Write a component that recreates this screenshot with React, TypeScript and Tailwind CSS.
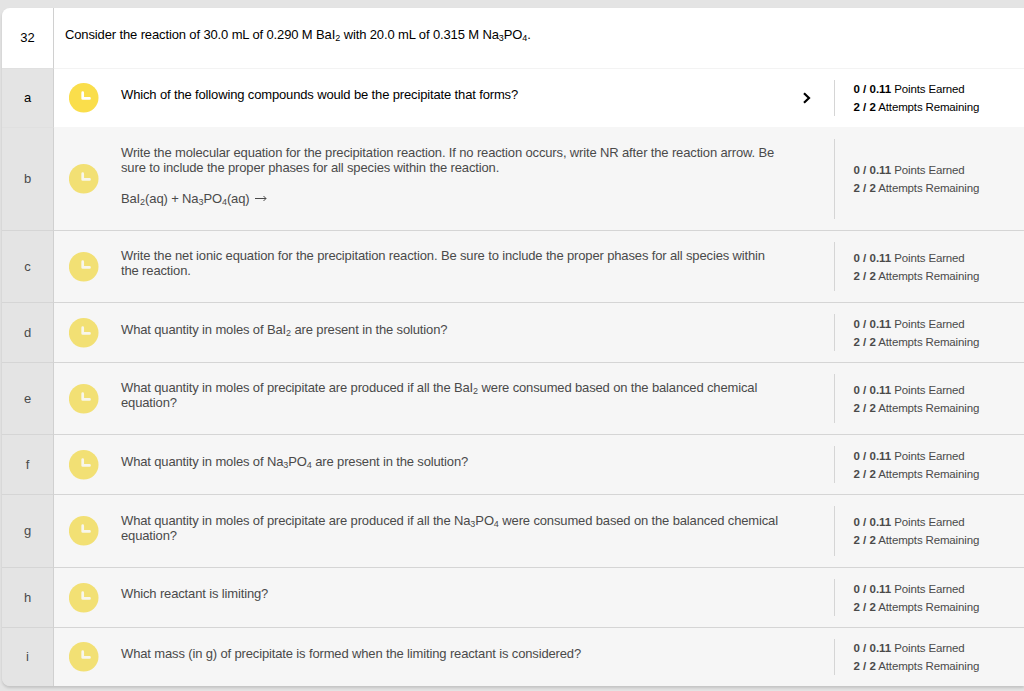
import React, { ReactNode } from "react";

type Part = {
  id: string;
  height: string;
  textPad: string;
  active?: boolean;
  body: ReactNode;
};

const Sub = ({ children }: { children: ReactNode }) => (
  <span className="relative top-[2px] text-[9px] leading-none tracking-normal">{children}</span>
);

const BaI2 = () => (
  <>
    BaI<Sub>2</Sub>
  </>
);

const Na3PO4 = () => (
  <>
    Na<Sub>3</Sub>PO<Sub>4</Sub>
  </>
);

const parts: Part[] = [
  {
    id: "a",
    height: "h-[59px]",
    textPad: "pt-[18px]",
    active: true,
    body: <p>Which of the following compounds would be the precipitate that forms?</p>,
  },
  {
    id: "b",
    height: "h-[103px]",
    textPad: "pt-[17.4px]",
    body: (
      <>
        <p>
          Write the molecular equation for the precipitation reaction. If no reaction occurs, write NR after the
          reaction arrow. Be
          <br />
          sure to include the proper phases for all species within the reaction.
        </p>
        <p className="mt-[15.6px] flex items-center">
          <span>
            <BaI2 />
            (aq) + <Na3PO4 />
            (aq)
          </span>
          <svg width="12" height="7" viewBox="0 0 12 7" className="ml-[5px]" fill="none" stroke="currentColor">
            <path d="M0 3.5h11M8.5 1l2.5 2.5L8.5 6" />
          </svg>
        </p>
      </>
    ),
  },
  {
    id: "c",
    height: "h-[72px]",
    textPad: "pt-[17px]",
    body: (
      <p>
        Write the net ionic equation for the precipitation reaction. Be sure to include the proper phases for all
        species within
        <br />
        the reaction.
      </p>
    ),
  },
  {
    id: "d",
    height: "h-[60px]",
    textPad: "pt-[19px]",
    body: (
      <p>
        What quantity in moles of <BaI2 /> are present in the solution?
      </p>
    ),
  },
  {
    id: "e",
    height: "h-[72px]",
    textPad: "pt-[17px]",
    body: (
      <p>
        What quantity in moles of precipitate are produced if all the <BaI2 /> were consumed based on the balanced
        chemical
        <br />
        equation?
      </p>
    ),
  },
  {
    id: "f",
    height: "h-[60px]",
    textPad: "pt-[19px]",
    body: (
      <p>
        What quantity in moles of <Na3PO4 /> are present in the solution?
      </p>
    ),
  },
  {
    id: "g",
    height: "h-[73px]",
    textPad: "pt-[18px]",
    body: (
      <p>
        What quantity in moles of precipitate are produced if all the <Na3PO4 /> were consumed based on the balanced
        chemical
        <br />
        equation?
      </p>
    ),
  },
  {
    id: "h",
    height: "h-[60px]",
    textPad: "pt-[18px]",
    body: <p>Which reactant is limiting?</p>,
  },
  {
    id: "i",
    height: "h-[59px]",
    textPad: "pt-[18px]",
    body: <p>What mass (in g) of precipitate is formed when the limiting reactant is considered?</p>,
  },
];

const ClockIcon = ({ active }: { active?: boolean }) => (
  <svg width="30" height="30" viewBox="0 0 30 30" className="shrink-0" fill="none">
    <circle cx="14.7" cy="14.8" r="14.8" fill={active ? "#fade4b" : "#f2e074"} />
    <path
      d="M13.7 9.7v5.7h6.8"
      stroke={active ? "#fff" : "#f8f6ec"}
      strokeWidth="2.7"
      strokeLinecap="round"
      strokeLinejoin="round"
    />
  </svg>
);

const PartRow = ({ part }: { part: Part }) => {
  const { id, height, textPad, active, body } = part;

  return (
    <div className={`flex ${height} ${active ? "text-black" : "text-[#4a4a4a]"}`}>
      <div
        className={`flex w-[52px] shrink-0 items-center justify-center border-t border-r border-r-[#d0d0d0] bg-[#e4e4e4] text-[13px] ${
          active || id === "b" ? "border-t-[#e0e0e0]" : "border-t-[#d5d5d5]"
        }`}
      >
        {id}
      </div>
      <div
        className={`flex flex-1 border-t ${
          active ? "border-[#f3f3f3] bg-white" : id === "b" ? "border-[#f6f6f6] bg-[#f6f6f6]" : "border-[#d5d5d5] bg-[#f6f6f6]"
        }`}
      >
        <div className="flex w-[67px] shrink-0 items-center pl-[15px]">
          <ClockIcon active={active} />
        </div>
        <div className={`w-[682px] shrink-0 text-[13px] leading-[15px] tracking-[-0.142px] whitespace-nowrap ${textPad}`}>
          {body}
        </div>
        <div className="flex w-[31px] shrink-0 items-center">
          {active && (
            <svg width="8" height="12" viewBox="0 0 8 12" fill="none" stroke="#000" strokeWidth="2.2">
              <path d="M1 1.2l5 4.8-5 4.8" />
            </svg>
          )}
        </div>
        <div className="my-[11px] flex flex-1 flex-col justify-center border-l border-[#d5d5d5] pl-[18.5px] text-[11.5px] leading-[18px] tracking-[-0.15px] whitespace-nowrap">
          <p>
            <b className="tracking-normal">0 / 0.11</b> Points Earned
          </p>
          <p>
            <b className="tracking-normal">2 / 2</b> Attempts Remaining
          </p>
        </div>
      </div>
    </div>
  );
};

const App = () => {
  return (
    <main className="h-[691px] w-[1024px] overflow-hidden bg-[#e4e4e4] pt-2 pl-0.5 font-['Liberation_Sans',Arial,sans-serif]">
      <div className="overflow-hidden rounded-l-lg shadow-[0_2px_3px_rgba(0,0,0,0.15)]">
        <div className="flex h-[60px] bg-white text-black">
          <div className="flex w-[52px] shrink-0 items-center justify-center border-r border-[#d0d0d0] text-[13px]">
            32
          </div>
          <p className="pt-[19px] pl-[11px] text-[13px] leading-[15px] tracking-[-0.13px]">
            Consider the reaction of 30.0 mL of 0.290 M <BaI2 /> with 20.0 mL of 0.315 M <Na3PO4 />.
          </p>
        </div>
        {parts.map((part) => (
          <PartRow key={part.id} part={part} />
        ))}
      </div>
    </main>
  );
};

export default App;
